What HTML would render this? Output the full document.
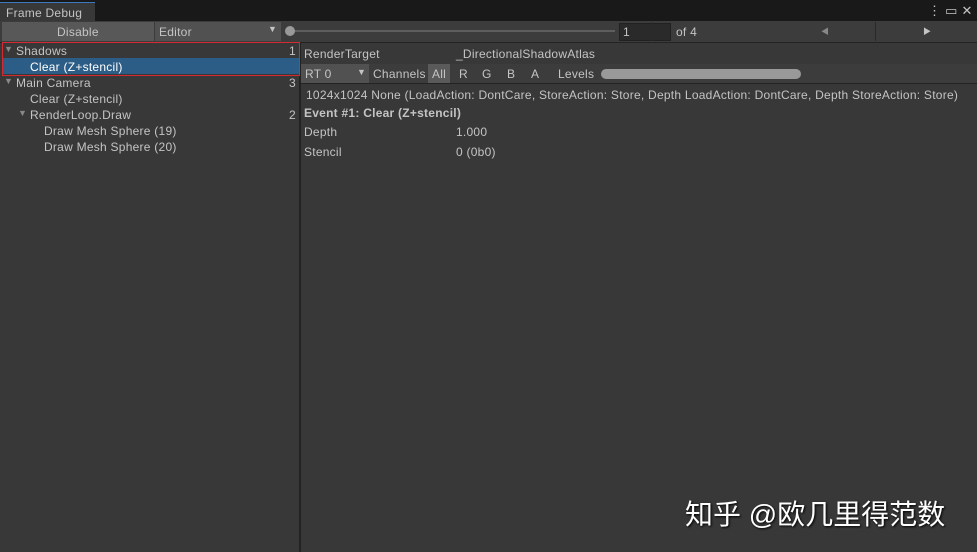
<!DOCTYPE html><html><head><style>
body{margin:0;width:977px;height:552px;background:#383838;font-family:"Liberation Sans","Noto Sans CJK SC",sans-serif;font-size:12px;letter-spacing:0.25px;color:#c4c4c4;position:relative;overflow:hidden}
.a{position:absolute;white-space:nowrap}
</style></head><body>
<div class="a" style="left:0;top:0;width:977px;height:21px;background:#191919"></div>
<div class="a" style="left:0;top:2px;width:95px;height:19px;background:#383838;border-top:1px solid #3a79bb"></div>
<div class="a" style="left:6px;top:6px;color:#c4c4c4">Frame Debug</div>
<div class="a" style="left:928px;top:3px;color:#c4c4c4;font-size:13px">⋮ ▭ ✕</div>
<div class="a" style="left:0;top:21px;width:977px;height:21px;background:#3c3c3c;border-bottom:1px solid #232323"></div>
<div class="a" style="left:2px;top:22px;width:152px;height:19px;background:#585858"></div>
<div class="a" style="left:57px;top:25px">Disable</div>
<div class="a" style="left:155px;top:22px;width:126px;height:19px;background:#515151"></div>
<div class="a" style="left:159px;top:25px">Editor</div>
<div class="a" style="left:268px;top:24px;font-size:9px">▼</div>
<div class="a" style="left:290px;top:30px;width:325px;height:2px;background:#5e5e5e"></div>
<div class="a" style="left:285px;top:26px;width:10px;height:10px;border-radius:50%;background:#999"></div>
<div class="a" style="left:619px;top:23px;width:50px;height:16px;background:#2a2a2a;border:1px solid #212121"></div>
<div class="a" style="left:623px;top:25px">1</div>
<div class="a" style="left:676px;top:25px">of 4</div>
<div class="a" style="left:651px;top:22px;width:224px;height:19px;border-left:1px solid #2a2a2a"></div>
<div class="a" style="left:875px;top:22px;width:102px;height:19px;border-left:1px solid #2a2a2a"></div>
<div class="a" style="left:821px;top:26px;font-size:8px;color:#888">◀</div>
<div class="a" style="left:923px;top:26px;font-size:8px">▶</div>
<div class="a" style="left:299px;top:42px;width:2px;height:510px;background:#232323"></div>
<div class="a" style="left:3px;top:58px;width:296px;height:16px;background:#2c5d87"></div>
<div class="a" style="left:2px;top:42px;width:296px;height:32px;border:1px solid #d42a34"></div>
<div class="a" style="left:4px;top:44px;font-size:9px;color:#888">▼</div>
<div class="a" style="left:16px;top:44px">Shadows</div><div class="a" style="left:289px;top:44px">1</div>
<div class="a" style="left:30px;top:60px;color:#fff">Clear (Z+stencil)</div>
<div class="a" style="left:4px;top:76px;font-size:9px;color:#888">▼</div>
<div class="a" style="left:16px;top:76px">Main Camera</div><div class="a" style="left:289px;top:76px">3</div>
<div class="a" style="left:30px;top:92px">Clear (Z+stencil)</div>
<div class="a" style="left:18px;top:108px;font-size:9px;color:#888">▼</div>
<div class="a" style="left:30px;top:108px">RenderLoop.Draw</div><div class="a" style="left:289px;top:108px">2</div>
<div class="a" style="left:44px;top:124px">Draw Mesh Sphere (19)</div>
<div class="a" style="left:44px;top:140px">Draw Mesh Sphere (20)</div>
<div class="a" style="left:304px;top:47px">RenderTarget</div>
<div class="a" style="left:456px;top:47px">_DirectionalShadowAtlas</div>
<div class="a" style="left:301px;top:64px;width:676px;height:19px;background:#3c3c3c;border-bottom:1px solid #232323"></div>
<div class="a" style="left:301px;top:64px;width:68px;height:19px;background:#515151"></div>
<div class="a" style="left:305px;top:67px">RT 0</div><div class="a" style="left:357px;top:67px;font-size:9px">▼</div>
<div class="a" style="left:373px;top:67px">Channels</div>
<div class="a" style="left:428px;top:64px;width:22px;height:19px;background:#5a5a5a"></div>
<div class="a" style="left:432px;top:67px">All</div>
<div class="a" style="left:459px;top:67px">R</div><div class="a" style="left:482px;top:67px">G</div>
<div class="a" style="left:507px;top:67px">B</div><div class="a" style="left:531px;top:67px">A</div>
<div class="a" style="left:558px;top:67px">Levels</div>
<div class="a" style="left:601px;top:69px;width:200px;height:10px;background:#999;border-radius:5px"></div>
<div class="a" style="left:306px;top:88px">1024x1024 None (LoadAction: DontCare, StoreAction: Store, Depth LoadAction: DontCare, Depth StoreAction: Store)</div>
<div class="a" style="left:304px;top:106px;font-weight:bold">Event #1: Clear (Z+stencil)</div>
<div class="a" style="left:304px;top:125px">Depth</div><div class="a" style="left:456px;top:125px">1.000</div>
<div class="a" style="left:304px;top:145px">Stencil</div><div class="a" style="left:456px;top:145px">0 (0b0)</div>
<div class="a" style="left:685px;top:493px;font-size:28px;letter-spacing:0;color:#fff;text-shadow:1px 1px 2px #000">知乎 @欧几里得范数</div>
</body></html>
